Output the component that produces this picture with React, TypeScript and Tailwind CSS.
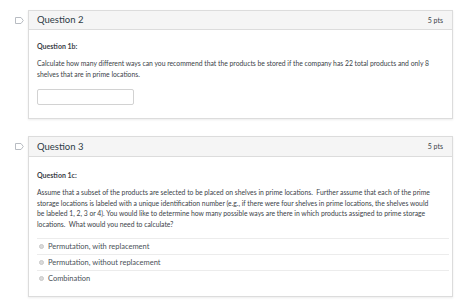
import React from "react";

const Flag = () => (
  <svg width="9" height="7" viewBox="0 0 9 7" className="shrink-0">
    <path d="M0.5 0.5 H6 L8.3 3.5 L6 6.5 H0.5 Z" fill="none" stroke="#b8bcc2" strokeWidth="1" />
  </svg>
);

const Radio = () => (
  <span className="inline-block w-[5px] h-[5px] rounded-full bg-[#dadada] border border-[#c8c8c8] shrink-0" />
);

export default function App() {
  return (
    <div className="w-[474px] h-[305px] bg-white text-[#3b4248] [font-family:Lato,'Noto_Sans',sans-serif] pt-[10px]">
      {/* Question 2 */}
      <div className="flex items-start">
        <div className="w-[28px] flex justify-end pr-[4px] pt-[7px]">
          <Flag />
        </div>
        <div className="w-[425px] border border-[#dcdcdc] shadow-[0_1px_2px_rgba(0,0,0,0.08)]">
          <div className="h-[19px] bg-[#f5f5f5] border-b border-[#dcdcdc] flex items-center justify-between pl-[8px] pr-[9px]">
            <span className="text-[9.5px] leading-none text-[#2d3b45]">Question 2</span>
            <span className="text-[7px] leading-none">5 pts</span>
          </div>
          <div className="pl-[8px] pr-[17px] pt-[13px] pb-[13px]">
            <div className="text-[7px] leading-none font-bold">Question 1b:</div>
            <div className="text-[6.8px] leading-[11px] mt-[8px]">
              Calculate how many different ways can you recommend that the products be stored if the company has 22 total products and only 8 shelves that are in prime locations.
            </div>
            <div className="mt-[9px] w-[97px] h-[16px] border border-[#d2d2d2] rounded-[2px] bg-white" />
          </div>
        </div>
      </div>

      {/* Question 3 */}
      <div className="flex items-start mt-[17px]">
        <div className="w-[28px] flex justify-end pr-[4px] pt-[7px]">
          <Flag />
        </div>
        <div className="w-[425px] border border-[#dcdcdc] shadow-[0_1px_2px_rgba(0,0,0,0.08)]">
          <div className="h-[20px] bg-[#f5f5f5] border-b border-[#dcdcdc] flex items-center justify-between pl-[8px] pr-[9px]">
            <span className="text-[9.5px] leading-none text-[#2d3b45]">Question 3</span>
            <span className="text-[7px] leading-none">5 pts</span>
          </div>
          <div className="pl-[8px] pr-[17px] pt-[15px] pb-[10px]">
            <div className="text-[7px] leading-none font-bold">Question 1c:</div>
            <div className="text-[6.8px] leading-[10.7px] mt-[8px]">
              Assume that a subset of the products are selected to be placed on shelves in prime locations.&nbsp; Further assume that each of the prime storage locations is labeled with a unique identification number (e.g., if there were four shelves in prime locations, the shelves would be labeled 1, 2, 3 or 4). You would like to determine how many possible ways are there in which products assigned to prime storage locations.&nbsp; What would you need to calculate?
            </div>
            <div className="mt-[8px] mr-[-14px]">
              {["Permutation, with replacement", "Permutation, without replacement", "Combination"].map((t, i) => (
                <div key={i} className="flex items-center gap-[4px] h-[16px] pl-[2px] border-t border-[#ececec]">
                  <Radio />
                  <span className="text-[7.5px] leading-none text-[#4a5158]">{t}</span>
                </div>
              ))}
            </div>
          </div>
        </div>
      </div>
    </div>
  );
}
